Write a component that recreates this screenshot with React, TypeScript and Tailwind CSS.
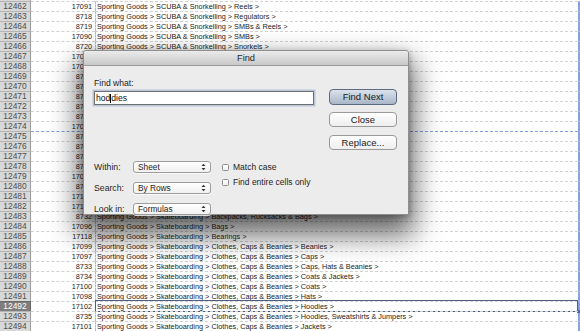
import React from "react";

type Row = [number, string, string];

const SG = "Sporting Goods > SCUBA & Snorkelling > ";
const SK = "Sporting Goods > Skateboarding > ";
const CC = "Sporting Goods > Skateboarding > Clothes, Caps & Beanies > ";

const rows: Row[] = [
  [12462, "17091", SG + "Reels >"],
  [12463, "8718", SG + "Regulators >"],
  [12464, "8719", SG + "SMBs & Reels >"],
  [12465, "17090", SG + "SMBs >"],
  [12466, "8720", SG + "Snorkels >"],
  [12467, "17092", ""],
  [12468, "17093", ""],
  [12469, "8721", ""],
  [12470, "8722", ""],
  [12471, "8723", ""],
  [12472, "8724", ""],
  [12473, "8725", ""],
  [12474, "17094", ""],
  [12475, "8726", ""],
  [12476, "8727", ""],
  [12477, "8728", ""],
  [12478, "8729", ""],
  [12479, "17095", ""],
  [12480, "8730", ""],
  [12481, "17103", ""],
  [12482, "17104", ""],
  [12483, "8732", SK + "Backpacks, Rucksacks & Bags >"],
  [12484, "17096", SK + "Bags >"],
  [12485, "17118", SK + "Bearings >"],
  [12486, "17099", CC + "Beanies >"],
  [12487, "17097", CC + "Caps >"],
  [12488, "8733", CC + "Caps, Hats & Beanies >"],
  [12489, "8734", CC + "Coats & Jackets >"],
  [12490, "17100", CC + "Coats >"],
  [12491, "17098", CC + "Hats >"],
  [12492, "17102", CC + "Hoodies >"],
  [12493, "8735", CC + "Hoodies, Sweatshirts & Jumpers >"],
  [12494, "17101", CC + "Jackets >"],
];

function SelectArrows() {
  return (
    <svg width="5" height="8" viewBox="0 0 5 8" className="shrink-0">
      <path d="M0.5 3 L2.5 0.8 L4.5 3 Z" fill="#333" />
      <path d="M0.5 5 L2.5 7.2 L4.5 5 Z" fill="#333" />
    </svg>
  );
}

function Select({ value }: { value: string }) {
  return (
    <div className="flex items-center w-[78px] h-[12px] rounded-[3px] border border-[#9c9c9c] bg-gradient-to-b from-[#ffffff] to-[#f1f1f1] pl-[4px] pr-[4px] shadow-[0_1px_0_rgba(255,255,255,0.8)]">
      <span className="flex-1 text-[8.3px] leading-[10px] text-[#1e1e1e]">{value}</span>
      <SelectArrows />
    </div>
  );
}

function Checkbox({ label }: { label: string }) {
  return (
    <div className="flex items-center h-[12px]">
      <div className="w-[7px] h-[7px] rounded-[1.5px] border border-[#8e8e8e] bg-gradient-to-b from-white to-[#eeeeee]" />
      <span className="ml-[4px] text-[8.5px] leading-[10px] text-[#1e1e1e]">{label}</span>
    </div>
  );
}

function Button({ label, primary, h }: { label: string; primary?: boolean; h: string }) {
  return (
    <div
      className={
        "w-[68px] flex items-center justify-center rounded-[4px] border text-[9.5px] leading-[10px] text-[#1a1a1a] " +
        h +
        (primary
          ? " border-[#5d6b82] bg-gradient-to-b from-[#dbe2ec] to-[#a9b6c9]"
          : " border-[#9a9a9a] bg-gradient-to-b from-[#ffffff] to-[#eeeeee]")
      }
    >
      {label}
    </div>
  );
}

export default function App() {
  return (
    <div className="relative w-[580px] h-[331px] overflow-hidden bg-white font-['Liberation_Sans',Arial,sans-serif]">
      {/* sheet */}
      <div className="flex flex-col">
        <div className="flex h-[1px]">
          <div className="w-[31px] bg-[#d8d8d8] border-r border-[#9c9c9c]" />
        </div>
        {rows.map(([n, num, text]) => {
          const sel = n === 12492;
          const pageBreak = n === 12475;
          const lineCls = pageBreak
            ? "border-t border-dashed border-[#7f9fd6]"
            : "border-t border-dashed border-[#d2d2d2]";
          return (
            <div key={n} className="flex h-[10px]">
              <div
                className={
                  "w-[31px] shrink-0 flex items-center justify-center border-t border-r text-[8.4px] leading-[9px] " +
                  (sel
                    ? "bg-[#7d7d7d] text-white border-t-[#6a6a6a] border-r-[#6a6a6a]"
                    : "bg-[#d8d8d8] text-[#4e4e4e] border-t-[#b4b4b4] border-r-[#9c9c9c]")
                }
              >
                {n}
              </div>
              <div className={"w-[64px] shrink-0 flex items-center justify-end pr-[3px] text-[7.3px] leading-[9px] text-[#1c1c1c] " + lineCls}>
                {num}
              </div>
              <div className={"relative w-[483px] shrink-0 flex items-center border-l border-l-[#a8bbdc] border-l-dashed pl-[1px] text-[7.3px] leading-[9px] text-[#1c1c1c] whitespace-nowrap " + lineCls}>
                {text}
                {sel && (
                  <>
                    <div className="absolute left-[-1px] top-[-2px] right-0 bottom-[-1px] border border-[#4e5e7e]" />
                    <div className="absolute right-[-2px] bottom-[-2px] w-[3px] h-[3px] bg-[#4e6a9e]" />
                  </>
                )}
              </div>
              <div className={"w-[2px] shrink-0 border-l-2 border-dashed border-l-[#86a2da] " + lineCls} />
            </div>
          );
        })}
      </div>

      {/* Find dialog */}
      <div className="absolute left-[83px] top-[50px] w-[326px] h-[165px] flex flex-col border border-[#8f8f8f] rounded-t-[3px] bg-[#ececec] shadow-[0_15px_28px_5px_rgba(0,0,0,0.6),0_2px_6px_rgba(0,0,0,0.3)]">
        <div className="h-[15px] shrink-0 flex items-center justify-center border-b border-[#9b9b9b] rounded-t-[3px] bg-gradient-to-b from-[#ebebeb] to-[#c8c8c8] text-[9.3px] leading-[10px] text-[#2a2a2a]">
          Find
        </div>
        <div className="flex-1 flex flex-col pl-[10px] pr-[11px] pt-[12px]">
          <div className="flex justify-between">
            <div className="w-[220px] flex flex-col">
              <div className="h-[10px] text-[8.6px] leading-[10px] text-[#1e1e1e]">Find what:</div>
              <div className="mt-[3px] h-[14px] flex items-center border border-[#707070] bg-white pl-[1px] shadow-[0_0_0_1.5px_#b9c6da] text-[8.6px] leading-[10px] text-[#111]">
                <span>hod</span>
                <span className="inline-block w-[1px] h-[9px] bg-black" />
                <span>dies</span>
              </div>
            </div>
            <div className="flex flex-col pt-[11px]">
              <Button label="Find Next" primary h="h-[16px]" />
              <div className="mt-[7px]">
                <Button label="Close" h="h-[15px]" />
              </div>
              <div className="mt-[8px]">
                <Button label="Replace..." h="h-[15px]" />
              </div>
            </div>
          </div>
          <div className="mt-[11px] flex">
            <div className="flex flex-col gap-[9px]">
              {[
                ["Within:", "Sheet"],
                ["Search:", "By Rows"],
                ["Look in:", "Formulas"],
              ].map(([l, v]) => (
                <div key={l} className="flex items-center h-[12px]">
                  <span className="w-[39px] text-[8.7px] leading-[10px] text-[#1e1e1e]">{l}</span>
                  <Select value={v} />
                </div>
              ))}
            </div>
            <div className="ml-[11px] flex flex-col gap-[3px]">
              <Checkbox label="Match case" />
              <Checkbox label="Find entire cells only" />
            </div>
          </div>
        </div>
      </div>
    </div>
  );
}
